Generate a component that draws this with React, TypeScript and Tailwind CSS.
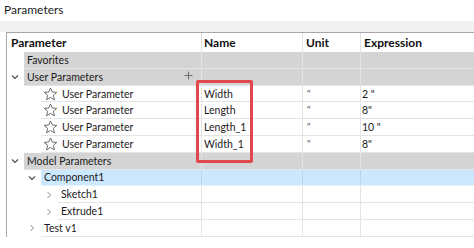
import React from "react";

type Row = {
  label: string;
  level: number;
  kind: "gray" | "white" | "blue";
  chevron?: "down" | "right";
  star?: boolean;
  plus?: boolean;
  name?: string;
  unit?: string;
  expr?: string;
};

const rows: Row[] = [
  { label: "Favorites", level: 0, kind: "gray" },
  { label: "User Parameters", level: 0, kind: "gray", chevron: "down", plus: true },
  { label: "User Parameter", level: 1, kind: "white", star: true, name: "Width", unit: '"', expr: '2 "' },
  { label: "User Parameter", level: 1, kind: "white", star: true, name: "Length", unit: '"', expr: '8"' },
  { label: "User Parameter", level: 1, kind: "white", star: true, name: "Length_1", unit: '"', expr: '10 "' },
  { label: "User Parameter", level: 1, kind: "white", star: true, name: "Width_1", unit: '"', expr: '8"' },
  { label: "Model Parameters", level: 0, kind: "gray", chevron: "down" },
  { label: "Component1", level: 1, kind: "blue", chevron: "down" },
  { label: "Sketch1", level: 2, kind: "white", chevron: "right" },
  { label: "Extrude1", level: 2, kind: "white", chevron: "right" },
  { label: "Test v1", level: 1, kind: "white", chevron: "right" },
];

function Chevron({ dir }: { dir: "down" | "right" }) {
  if (dir === "right") {
    return (
      <svg width="8" height="8" viewBox="0 0 8 8">
        <path d="M2.5 1 L5.5 4 L2.5 7" fill="none" stroke="#8a8a8a" strokeWidth="1" />
      </svg>
    );
  }
  return (
    <svg width="8" height="8" viewBox="0 0 8 8">
      <path d="M1 2.5 L4 5.5 L7 2.5" fill="none" stroke="#4a4a4a" strokeWidth="1.1" />
    </svg>
  );
}

function Star() {
  return (
    <svg width="15" height="14" viewBox="0 0 15 14">
      <path
        d="M7.5 1 L9.3 5 L13.8 5.4 L10.4 8.3 L11.4 12.8 L7.5 10.5 L3.6 12.8 L4.6 8.3 L1.2 5.4 L5.7 5 Z"
        fill="none"
        stroke="#5c5c5c"
        strokeWidth="0.9"
        strokeLinejoin="round"
      />
    </svg>
  );
}

export default function App() {
  const font = { fontFamily: 'Lato, "Noto Sans", sans-serif' };

  return (
    <div className="relative w-[474px] h-[248px] overflow-hidden bg-white text-[#1a1a1a]" style={font}>
      {/* titulo */}
      <div className="h-[21px] pl-[4px] pt-[2px] text-[12px] leading-[16px] text-[#222]">Parameters</div>
      <div className="h-[11px] bg-[#f0f0f0]" />

      {/* tabla */}
      <div className="ml-[6px] border-l border-t border-[#a7a7a7]">
        {/* cabecera */}
        <div className="flex h-[19px] text-[12px] font-bold leading-[19px] text-[#111]">
          <div className="w-[194px] pl-[4px]">Parameter</div>
          <div className="w-[101px] border-l border-[#e2e2e2] pl-[2px]">Name</div>
          <div className="w-[58px] border-l border-[#e2e2e2] pl-[3px]">Unit</div>
          <div className="flex-1 border-l border-[#e2e2e2] pl-[3px]">Expression</div>
        </div>

        {rows.map((r, i) => {
          const indent = 17 + r.level * 17;
          const bg =
            r.kind === "gray" ? "bg-[#d4d4d4] border-[#e4e4e4]" : r.kind === "blue" ? "bg-[#cce8ff] border-[#e8f3fd]" : "bg-white border-[#e4e4e4]";
          const sep = r.kind === "gray" ? "border-[#e2e2e2]" : r.kind === "blue" ? "border-[#b9d5ee]" : "border-[#e4e4e4]";
          return (
            <div key={i} className="flex h-[16.8px] text-[10.5px] leading-[16px]">
              <div className="flex shrink-0 items-center justify-end pr-[5px]" style={{ width: indent }}>
                {r.chevron ? <Chevron dir={r.chevron} /> : null}
              </div>
              <div className={`flex flex-1 border-b ${bg}`}>
                <div className="relative flex items-center" style={{ width: 194 - indent }}>
                  {r.star ? (
                    <div className="flex items-center gap-[4px] pl-[2px]">
                      <Star />
                      <span>{r.label}</span>
                    </div>
                  ) : (
                    <span className="pl-[3px]">{r.label}</span>
                  )}
                  {r.plus ? (
                    <svg className="absolute right-[8px] top-[2px]" width="9" height="9" viewBox="0 0 9 9">
                      <path d="M4.5 0.5 V8.5 M0.5 4.5 H8.5" stroke="#6f6f6f" strokeWidth="1.1" />
                    </svg>
                  ) : null}
                </div>
                <div className={`flex w-[101px] items-center border-l pl-[2px] ${sep}`}>{r.name}</div>
                <div className={`flex w-[58px] items-center border-l pl-[4px] text-[9px] text-[#444] ${sep}`}>{r.unit}</div>
                <div className={`flex flex-1 items-center border-l pl-[1px] ${sep}`}>{r.expr}</div>
              </div>
            </div>
          );
        })}
      </div>

      {/* recuadro rojo */}
      <div className="absolute left-[196px] top-[80px] h-[83px] w-[57px] rounded-[2px] border-[3px] border-[#e2474d]" />
    </div>
  );
}
